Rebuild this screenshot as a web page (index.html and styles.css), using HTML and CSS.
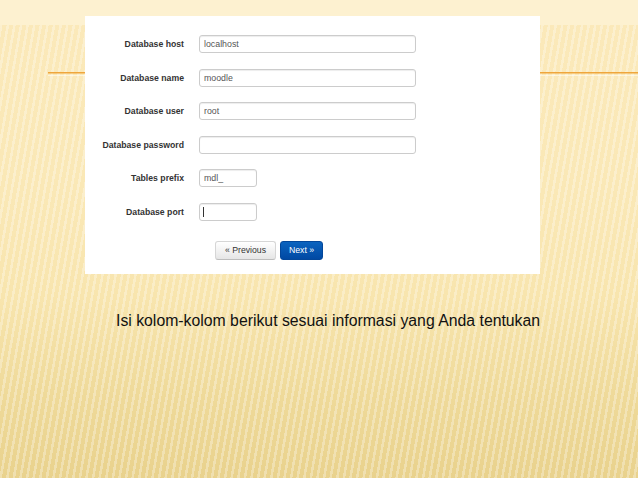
FILE: index.html
```html
<!DOCTYPE html>
<html lang="id">
<head>
    <meta charset="UTF-8">
    <meta name="viewport" content="width=device-width, initial-scale=1.0">
    <title>Instalasi Moodle - Pengaturan Database</title>
    <link rel="stylesheet" href="styles.css">
</head>
<body>
    <div class="slide">
        <div class="panel">
            <form class="db-form">
                <label for="dbhost" class="form-label">Database host</label>
                <input type="text" id="dbhost" class="form-input" value="localhost">

                <label for="dbname" class="form-label">Database name</label>
                <input type="text" id="dbname" class="form-input" value="moodle">

                <label for="dbuser" class="form-label">Database user</label>
                <input type="text" id="dbuser" class="form-input" value="root">

                <label for="dbpass" class="form-label">Database password</label>
                <input type="password" id="dbpass" class="form-input">

                <label for="prefix" class="form-label">Tables prefix</label>
                <input type="text" id="prefix" class="form-input form-input-small" value="mdl_">

                <label for="dbport" class="form-label">Database port</label>
                <div class="focus-wrap">
                    <input type="text" id="dbport" class="form-input form-input-small">
                </div>

                <div class="buttons">
                    <button type="button" class="btn btn-default">&laquo; Previous</button>
                    <button type="submit" class="btn btn-primary">Next &raquo;</button>
                </div>
            </form>
        </div>

        <p class="caption">Isi kolom-kolom berikut sesuai informasi yang Anda tentukan</p>
    </div>
</body>
</html>
```

FILE: styles.css
```css
body {
    margin: 0;
    font-family: "Liberation Sans", Arial, sans-serif;
}

/* slide background: light top band, thin slanted stripes, orange rule */
.slide {
    width: 638px;
    height: 478px;
    box-sizing: border-box;
    padding: 16px 0 0 85px;
    overflow: hidden;
    background:
        linear-gradient(#efa63c, #efa63c) 48px 72px / 590px 1.5px no-repeat,
        linear-gradient(rgba(255, 255, 255, 0.5), rgba(255, 255, 255, 0.5)) 48px 75px / 590px 1px no-repeat,
        linear-gradient(#fdf1d0, #fdf1d0) 0 0 / 100% 25px no-repeat,
        repeating-linear-gradient(100deg, rgba(255, 255, 255, 0.3) 0 2.5px, rgba(255, 255, 255, 0) 2.5px 6.5px) 0 25px / 100% 453px no-repeat,
        linear-gradient(180deg, #fbe9ba 0%, #fae8b6 40%, #f8e5ae 62%, #efda9a 82%, #e9d28d 100%);
}

.panel {
    width: 455px;
    height: 258px;
    box-sizing: border-box;
    padding-top: 19px;
    background: #fff;
}

.db-form {
    display: grid;
    grid-template-columns: 99px 217px;
    column-gap: 15px;
    row-gap: 15.6px;
    align-items: center;
}

.form-label {
    text-align: right;
    font-size: 8.7px;
    font-weight: bold;
    color: #333;
}

.form-input {
    display: block;
    width: 217px;
    height: 18px;
    box-sizing: border-box;
    margin: 0;
    padding: 0 4px;
    border: 1px solid #ccc;
    border-radius: 3px;
    box-shadow: inset 0 1px 1px rgba(0, 0, 0, 0.075);
    font-family: inherit;
    font-size: 8.8px;
    color: #555;
    background: #fff;
}

.form-input-small {
    width: 58px;
}

/* caret shown in the active field */
.focus-wrap {
    display: flex;
    position: relative;
    width: 58px;
}

.focus-wrap::after {
    content: "";
    position: absolute;
    left: 4px;
    top: 4px;
    width: 1px;
    height: 10px;
    background: #333;
}

.buttons {
    grid-column: 2;
    display: flex;
    gap: 4px;
    margin-top: 4.4px;
    padding-left: 16px;
}

.btn {
    height: 19px;
    box-sizing: border-box;
    padding: 0 7px;
    border-radius: 3px;
    font-family: inherit;
    font-size: 8.7px;
    cursor: pointer;
}

.btn-default {
    width: 61px;
    color: #333;
    border: 1px solid #d6d6d6;
    border-bottom-color: #bdbdbd;
    background: linear-gradient(#ffffff, #e6e6e6);
}

.btn-primary {
    width: 43px;
    color: #fff;
    border: 1px solid #03479a;
    background: linear-gradient(#0b63bf, #0049a3);
}

.caption {
    margin: 38px 0 0 31px;
    font-size: 15.8px;
    color: #111;
}
```
